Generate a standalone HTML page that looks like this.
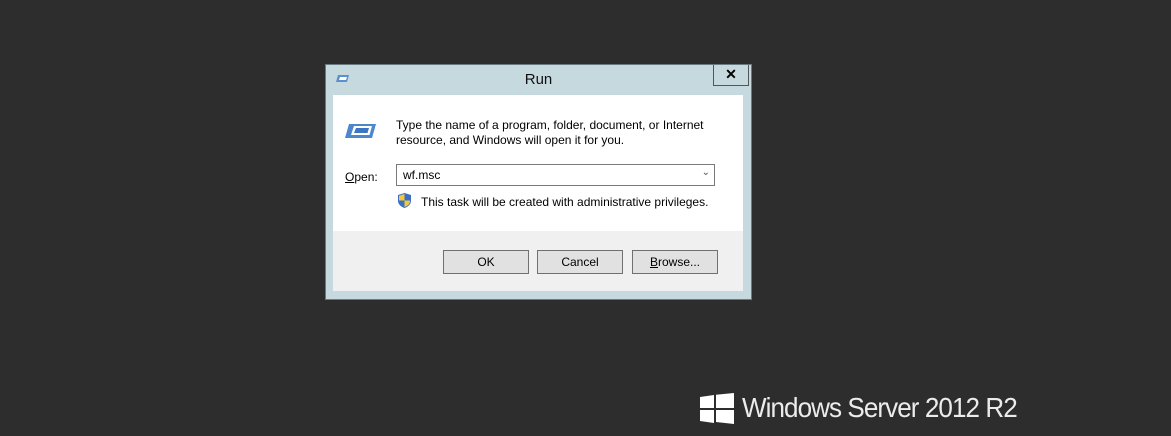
<!DOCTYPE html>
<html><head><style>
body{margin:0;width:1171px;height:436px;background:#2d2d2d;position:relative;overflow:hidden;font-family:"Liberation Sans",sans-serif;}
.dlg{position:absolute;left:325px;top:64px;width:425px;height:234px;background:#c6d9df;border:1px solid #6a7a80;}
.title{position:absolute;left:0;width:425px;top:6px;text-align:center;font-size:15px;color:#111;}
.close{position:absolute;left:387px;top:0;width:36px;height:21px;border:1px solid #555;border-top:none;box-sizing:border-box;text-align:center;font-weight:bold;font-size:14px;line-height:19px;color:#000;}
.client{position:absolute;left:7px;top:30px;width:410px;height:196px;background:#fff;}
.foot{position:absolute;left:0;top:136px;width:410px;height:60px;background:#f0f0f0;}
.t{position:absolute;font-size:12px;color:#000;}
.inp{position:absolute;left:63px;top:69px;width:319px;height:22px;border:1px solid #7a7a7a;box-sizing:border-box;font-size:12px;padding:3px 6px;}
.btn{position:absolute;top:155px;width:86px;height:24px;background:#e1e1e1;border:1px solid #707070;box-sizing:border-box;font-size:12px;text-align:center;line-height:22px;}
.logo{position:absolute;left:742px;top:392px;color:#ececec;font-size:28px;letter-spacing:-1px;white-space:nowrap;transform:scaleX(0.93);transform-origin:0 0;}
</style></head><body>
<div class="dlg">
<svg style="position:absolute;left:10px;top:9px" width="14" height="9"><path d="M2 1h11l-2 7H0z" fill="#5a8fd0"/><path d="M4 3h7l-1 3H3z" fill="#fff"/></svg>
<div class="title">Run</div>
<div class="close">✕</div>
<div class="client">
<svg style="position:absolute;left:12px;top:28px" width="32" height="16"><path d="M4 1h27l-4 14H0z" fill="#4c86cf"/><path d="M9 3h18l-2.5 9H6z" fill="#fff"/><path d="M11 5h13l-1.5 5H9z" fill="#3a76c4"/></svg>
<div class="t" style="left:63px;top:23px;line-height:15px">Type the name of a program, folder, document, or Internet<br>resource, and Windows will open it for you.</div>
<div class="t" style="left:12px;top:75px"><u>O</u>pen:</div>
<div class="inp">wf.msc<span style="position:absolute;right:4px;top:2px;font-size:10px;color:#555">&#8964;</span></div>
<svg style="position:absolute;left:65px;top:98px" width="13" height="15"><path d="M6.5 0L13 2v6c0 3-3 6-6.5 7C3 14 0 11 0 8V2z" fill="#3b6fc5"/><path d="M6.5 1v6.5H12V8c0 3-2.5 5-5.5 6zM1 7.5h5.5V1L1 2.7z" fill="#f5c83a"/></svg>
<div class="t" style="left:88px;top:100px">This task will be created with administrative privileges.</div>
<div class="foot"></div>
<div class="btn" style="left:110px">OK</div>
<div class="btn" style="left:204px">Cancel</div>
<div class="btn" style="left:299px"><u>B</u>rowse...</div>
</div>
</div>
<svg style="position:absolute;left:700px;top:393px" width="34" height="31"><path d="M0 4l14-2v13H0zM16 1.7L34 0v15H16zM0 17h14v13L0 28zM16 17h18v14l-18-2z" fill="#fff"/></svg>
<div class="logo">Windows Server 2012 R2</div>
</body></html>
